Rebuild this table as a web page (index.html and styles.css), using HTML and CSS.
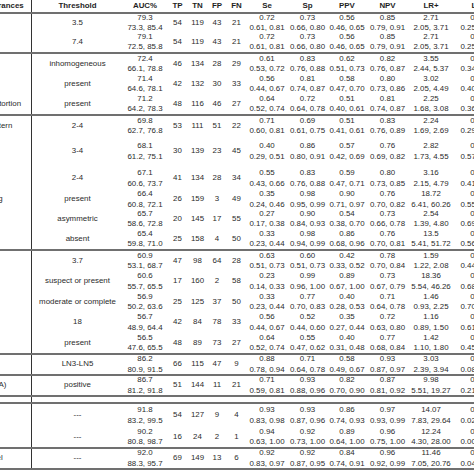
FILE: index.html
```html
<!DOCTYPE html>
<html>
<head>
<meta charset="utf-8">
<link rel="stylesheet" href="styles.css">
</head>
<body>
<div class="tbl">
  <div class="r hd h12">
    <div class="c lab">Imaging appearances</div>
    <div class="c thr">Threshold</div>
    <div class="c auc">AUC%</div>
    <div class="c tp">TP</div><div class="c tn">TN</div><div class="c fp">FP</div><div class="c fn">FN</div>
    <div class="c se">Se</div><div class="c sp">Sp</div><div class="c ppv">PPV</div><div class="c npv">NPV</div>
    <div class="c lrp">LR+</div><div class="c lrm">LR-</div>
  </div>

  <div class="r sep h18">
    <div class="c lab">Size (cm)</div><div class="c thr">3.5</div>
    <div class="c auc"><span>79.3</span><span>73.3, 85.4</span></div>
    <div class="c tp">54</div><div class="c tn">119</div><div class="c fp">43</div><div class="c fn">21</div>
    <div class="c se"><span>0.72</span><span>0.61, 0.81</span></div>
    <div class="c sp"><span>0.73</span><span>0.66, 0.80</span></div>
    <div class="c ppv"><span>0.56</span><span>0.46, 0.65</span></div>
    <div class="c npv"><span>0.85</span><span>0.79, 0.91</span></div>
    <div class="c lrp"><span>2.71</span><span>2.05, 3.71</span></div>
    <div class="c lrm"><span>0.38</span><span>0.25, 0.57</span></div>
  </div>
  <div class="r h20">
    <div class="c lab">Volume</div><div class="c thr">7.4</div>
    <div class="c auc"><span>79.1</span><span>72.5, 85.8</span></div>
    <div class="c tp">54</div><div class="c tn">119</div><div class="c fp">43</div><div class="c fn">21</div>
    <div class="c se"><span>0.72</span><span>0.61, 0.81</span></div>
    <div class="c sp"><span>0.73</span><span>0.66, 0.80</span></div>
    <div class="c ppv"><span>0.56</span><span>0.46, 0.65</span></div>
    <div class="c npv"><span>0.85</span><span>0.79, 0.91</span></div>
    <div class="c lrp"><span>2.71</span><span>2.05, 3.71</span></div>
    <div class="c lrm"><span>0.38</span><span>0.25, 0.57</span></div>
  </div>

  <div class="r sep h20">
    <div class="c lab">Echotexture</div><div class="c thr">inhomogeneous</div>
    <div class="c auc"><span>72.4</span><span>66.1, 78.8</span></div>
    <div class="c tp">46</div><div class="c tn">134</div><div class="c fp">28</div><div class="c fn">29</div>
    <div class="c se"><span>0.61</span><span>0.53, 0.72</span></div>
    <div class="c sp"><span>0.83</span><span>0.76, 0.88</span></div>
    <div class="c ppv"><span>0.62</span><span>0.51, 0.73</span></div>
    <div class="c npv"><span>0.82</span><span>0.76, 0.87</span></div>
    <div class="c lrp"><span>3.55</span><span>2.44, 5.37</span></div>
    <div class="c lrm"><span>0.47</span><span>0.34, 0.63</span></div>
  </div>
  <div class="r h20">
    <div class="c lab">Microlobulation</div><div class="c thr">present</div>
    <div class="c auc"><span>71.4</span><span>64.6, 78.1</span></div>
    <div class="c tp">42</div><div class="c tn">132</div><div class="c fp">30</div><div class="c fn">33</div>
    <div class="c se"><span>0.56</span><span>0.44, 0.67</span></div>
    <div class="c sp"><span>0.81</span><span>0.74, 0.87</span></div>
    <div class="c ppv"><span>0.58</span><span>0.47, 0.70</span></div>
    <div class="c npv"><span>0.80</span><span>0.73, 0.86</span></div>
    <div class="c lrp"><span>3.02</span><span>2.05, 4.49</span></div>
    <div class="c lrm"><span>0.54</span><span>0.40, 0.72</span></div>
  </div>
  <div class="r h20">
    <div class="c lab">Architectural distortion</div><div class="c thr">present</div>
    <div class="c auc"><span>71.2</span><span>64.2, 78.3</span></div>
    <div class="c tp">48</div><div class="c tn">116</div><div class="c fp">46</div><div class="c fn">27</div>
    <div class="c se"><span>0.64</span><span>0.52, 0.74</span></div>
    <div class="c sp"><span>0.72</span><span>0.64, 0.78</span></div>
    <div class="c ppv"><span>0.51</span><span>0.40, 0.61</span></div>
    <div class="c npv"><span>0.81</span><span>0.74, 0.87</span></div>
    <div class="c lrp"><span>2.25</span><span>1.68, 3.08</span></div>
    <div class="c lrm"><span>0.50</span><span>0.36, 0.67</span></div>
  </div>

  <div class="r sep h20">
    <div class="c lab">Calcification pattern</div><div class="c thr">2-4</div>
    <div class="c auc"><span>69.8</span><span>62.7, 76.8</span></div>
    <div class="c tp">53</div><div class="c tn">111</div><div class="c fp">51</div><div class="c fn">22</div>
    <div class="c se"><span>0.71</span><span>0.60, 0.81</span></div>
    <div class="c sp"><span>0.69</span><span>0.61, 0.75</span></div>
    <div class="c ppv"><span>0.51</span><span>0.41, 0.61</span></div>
    <div class="c npv"><span>0.83</span><span>0.76, 0.89</span></div>
    <div class="c lrp"><span>2.24</span><span>1.69, 2.69</span></div>
    <div class="c lrm"><span>0.42</span><span>0.29, 0.60</span></div>
  </div>
  <div class="r h31">
    <div class="c lab">Vascularity</div><div class="c thr">3-4</div>
    <div class="c auc"><span>68.1</span><span>61.2, 75.1</span></div>
    <div class="c tp">30</div><div class="c tn">139</div><div class="c fp">23</div><div class="c fn">45</div>
    <div class="c se"><span>0.40</span><span>0.29, 0.51</span></div>
    <div class="c sp"><span>0.86</span><span>0.80, 0.91</span></div>
    <div class="c ppv"><span>0.57</span><span>0.42, 0.69</span></div>
    <div class="c npv"><span>0.76</span><span>0.69, 0.82</span></div>
    <div class="c lrp"><span>2.82</span><span>1.73, 4.55</span></div>
    <div class="c lrm"><span>0.70</span><span>0.57, 0.85</span></div>
  </div>
  <div class="r h23">
    <div class="c lab">BI-RADS</div><div class="c thr">2-4</div>
    <div class="c auc"><span>67.1</span><span>60.6, 73.7</span></div>
    <div class="c tp">41</div><div class="c tn">134</div><div class="c fp">28</div><div class="c fn">34</div>
    <div class="c se"><span>0.55</span><span>0.43, 0.66</span></div>
    <div class="c sp"><span>0.83</span><span>0.76, 0.88</span></div>
    <div class="c ppv"><span>0.59</span><span>0.47, 0.71</span></div>
    <div class="c npv"><span>0.80</span><span>0.73, 0.85</span></div>
    <div class="c lrp"><span>3.16</span><span>2.15, 4.79</span></div>
    <div class="c lrm"><span>0.54</span><span>0.41, 0.70</span></div>
  </div>
  <div class="r h19">
    <div class="c lab">Distal shadowing</div><div class="c thr">present</div>
    <div class="c auc"><span>66.4</span><span>60.8, 72.1</span></div>
    <div class="c tp">26</div><div class="c tn">159</div><div class="c fp">3</div><div class="c fn">49</div>
    <div class="c se"><span>0.35</span><span>0.24, 0.46</span></div>
    <div class="c sp"><span>0.98</span><span>0.95, 0.99</span></div>
    <div class="c ppv"><span>0.90</span><span>0.71, 0.97</span></div>
    <div class="c npv"><span>0.76</span><span>0.70, 0.82</span></div>
    <div class="c lrp"><span>18.72</span><span>6.41, 60.26</span></div>
    <div class="c lrm"><span>0.66</span><span>0.55, 0.78</span></div>
  </div>
  <div class="r h20">
    <div class="c lab">Shape</div><div class="c thr">asymmetric</div>
    <div class="c auc"><span>65.7</span><span>58.6, 72.8</span></div>
    <div class="c tp">20</div><div class="c tn">145</div><div class="c fp">17</div><div class="c fn">55</div>
    <div class="c se"><span>0.27</span><span>0.17, 0.38</span></div>
    <div class="c sp"><span>0.90</span><span>0.84, 0.93</span></div>
    <div class="c ppv"><span>0.54</span><span>0.38, 0.70</span></div>
    <div class="c npv"><span>0.73</span><span>0.66, 0.78</span></div>
    <div class="c lrp"><span>2.54</span><span>1.39, 4.80</span></div>
    <div class="c lrm"><span>0.81</span><span>0.69, 0.94</span></div>
  </div>
  <div class="r h20">
    <div class="c lab">Hilum</div><div class="c thr">absent</div>
    <div class="c auc"><span>65.4</span><span>59.8, 71.0</span></div>
    <div class="c tp">25</div><div class="c tn">158</div><div class="c fp">4</div><div class="c fn">50</div>
    <div class="c se"><span>0.33</span><span>0.23, 0.44</span></div>
    <div class="c sp"><span>0.98</span><span>0.94, 0.99</span></div>
    <div class="c ppv"><span>0.86</span><span>0.68, 0.96</span></div>
    <div class="c npv"><span>0.76</span><span>0.70, 0.81</span></div>
    <div class="c lrp"><span>13.5</span><span>5.41, 51.72</span></div>
    <div class="c lrm"><span>0.68</span><span>0.56, 0.81</span></div>
  </div>

  <div class="r sep h20">
    <div class="c lab">Diameter</div><div class="c thr">3.7</div>
    <div class="c auc"><span>60.9</span><span>53.1, 68.7</span></div>
    <div class="c tp">47</div><div class="c tn">98</div><div class="c fp">64</div><div class="c fn">28</div>
    <div class="c se"><span>0.63</span><span>0.51, 0.73</span></div>
    <div class="c sp"><span>0.60</span><span>0.51, 0.73</span></div>
    <div class="c ppv"><span>0.42</span><span>0.33, 0.52</span></div>
    <div class="c npv"><span>0.78</span><span>0.70, 0.84</span></div>
    <div class="c lrp"><span>1.59</span><span>1.22, 2.08</span></div>
    <div class="c lrm"><span>0.62</span><span>0.44, 0.86</span></div>
  </div>
  <div class="r h21">
    <div class="c lab">Necrosis</div><div class="c thr">suspect or present</div>
    <div class="c auc"><span>60.6</span><span>55.7, 65.5</span></div>
    <div class="c tp">17</div><div class="c tn">160</div><div class="c fp">2</div><div class="c fn">58</div>
    <div class="c se"><span>0.23</span><span>0.14, 0.33</span></div>
    <div class="c sp"><span>0.99</span><span>0.96, 1.00</span></div>
    <div class="c ppv"><span>0.89</span><span>0.67, 1.00</span></div>
    <div class="c npv"><span>0.73</span><span>0.67, 0.79</span></div>
    <div class="c lrp"><span>18.36</span><span>5.54, 46.26</span></div>
    <div class="c lrm"><span>0.78</span><span>0.68, 0.88</span></div>
  </div>
  <div class="r h20">
    <div class="c lab">Loss of hilum</div><div class="c thr">moderate or complete</div>
    <div class="c auc"><span>56.9</span><span>50.2, 63.6</span></div>
    <div class="c tp">25</div><div class="c tn">125</div><div class="c fp">37</div><div class="c fn">50</div>
    <div class="c se"><span>0.33</span><span>0.23, 0.44</span></div>
    <div class="c sp"><span>0.77</span><span>0.70, 0.83</span></div>
    <div class="c ppv"><span>0.40</span><span>0.28, 0.53</span></div>
    <div class="c npv"><span>0.71</span><span>0.64, 0.78</span></div>
    <div class="c lrp"><span>1.46</span><span>0.93, 2.25</span></div>
    <div class="c lrm"><span>0.87</span><span>0.70, 1.08</span></div>
  </div>
  <div class="r h21">
    <div class="c lab">Age</div><div class="c thr">18</div>
    <div class="c auc"><span>56.7</span><span>48.9, 64.4</span></div>
    <div class="c tp">42</div><div class="c tn">84</div><div class="c fp">78</div><div class="c fn">33</div>
    <div class="c se"><span>0.56</span><span>0.44, 0.67</span></div>
    <div class="c sp"><span>0.52</span><span>0.44, 0.60</span></div>
    <div class="c ppv"><span>0.35</span><span>0.27, 0.44</span></div>
    <div class="c npv"><span>0.72</span><span>0.63, 0.80</span></div>
    <div class="c lrp"><span>1.16</span><span>0.89, 1.50</span></div>
    <div class="c lrm"><span>0.85</span><span>0.61, 1.17</span></div>
  </div>
  <div class="r h20">
    <div class="c lab">Calcification</div><div class="c thr">present</div>
    <div class="c auc"><span>56.5</span><span>47.6, 65.5</span></div>
    <div class="c tp">48</div><div class="c tn">89</div><div class="c fp">73</div><div class="c fn">27</div>
    <div class="c se"><span>0.64</span><span>0.52, 0.74</span></div>
    <div class="c sp"><span>0.55</span><span>0.47, 0.62</span></div>
    <div class="c ppv"><span>0.40</span><span>0.31, 0.48</span></div>
    <div class="c npv"><span>0.77</span><span>0.68, 0.84</span></div>
    <div class="c lrp"><span>1.42</span><span>1.10, 1.80</span></div>
    <div class="c lrm"><span>0.65</span><span>0.45, 0.95</span></div>
  </div>

  <div class="r sep h19">
    <div class="c lab">Location</div><div class="c thr">LN3-LN5</div>
    <div class="c auc"><span>86.2</span><span>80.9, 91.5</span></div>
    <div class="c tp">66</div><div class="c tn">115</div><div class="c fp">47</div><div class="c fn">9</div>
    <div class="c se"><span>0.88</span><span>0.78, 0.94</span></div>
    <div class="c sp"><span>0.71</span><span>0.64, 0.78</span></div>
    <div class="c ppv"><span>0.58</span><span>0.49, 0.67</span></div>
    <div class="c npv"><span>0.93</span><span>0.87, 0.97</span></div>
    <div class="c lrp"><span>3.03</span><span>2.39, 3.94</span></div>
    <div class="c lrm"><span>0.17</span><span>0.08, 0.33</span></div>
  </div>

  <div class="r sep h19">
    <div class="c lab">Elastography (PA)</div><div class="c thr">positive</div>
    <div class="c auc"><span>86.7</span><span>81.2, 91.8</span></div>
    <div class="c tp">51</div><div class="c tn">144</div><div class="c fp">11</div><div class="c fn">21</div>
    <div class="c se"><span>0.71</span><span>0.59, 0.81</span></div>
    <div class="c sp"><span>0.93</span><span>0.88, 0.96</span></div>
    <div class="c ppv"><span>0.82</span><span>0.70, 0.90</span></div>
    <div class="c npv"><span>0.87</span><span>0.81, 0.92</span></div>
    <div class="c lrp"><span>9.98</span><span>5.51, 19.27</span></div>
    <div class="c lrm"><span>0.31</span><span>0.21, 0.46</span></div>
  </div>

  <div class="r sep h5">
    <div class="c lab"></div>
  </div>

  <div class="r sep h23">
    <div class="c lab">Model 1</div><div class="c thr">---</div>
    <div class="c auc"><span>91.8</span><span>83.2, 99.5</span></div>
    <div class="c tp">54</div><div class="c tn">127</div><div class="c fp">9</div><div class="c fn">4</div>
    <div class="c se"><span>0.93</span><span>0.83, 0.98</span></div>
    <div class="c sp"><span>0.93</span><span>0.87, 0.96</span></div>
    <div class="c ppv"><span>0.86</span><span>0.74, 0.93</span></div>
    <div class="c npv"><span>0.97</span><span>0.93, 0.99</span></div>
    <div class="c lrp"><span>14.07</span><span>7.83, 29.64</span></div>
    <div class="c lrm"><span>0.08</span><span>0.02, 0.20</span></div>
  </div>
  <div class="r h20">
    <div class="c lab">Model 2</div><div class="c thr">---</div>
    <div class="c auc"><span>90.2</span><span>80.8, 98.7</span></div>
    <div class="c tp">16</div><div class="c tn">24</div><div class="c fp">2</div><div class="c fn">1</div>
    <div class="c se"><span>0.94</span><span>0.63, 1.00</span></div>
    <div class="c sp"><span>0.92</span><span>0.73, 1.00</span></div>
    <div class="c ppv"><span>0.89</span><span>0.64, 1.00</span></div>
    <div class="c npv"><span>0.96</span><span>0.75, 1.00</span></div>
    <div class="c lrp"><span>12.24</span><span>4.30, 28.00</span></div>
    <div class="c lrm"><span>0.07</span><span>0.00, 0.44</span></div>
  </div>

  <div class="r sep end h19">
    <div class="c lab">Combined model</div><div class="c thr">---</div>
    <div class="c auc"><span>92.0</span><span>88.3, 95.7</span></div>
    <div class="c tp">69</div><div class="c tn">149</div><div class="c fp">13</div><div class="c fn">6</div>
    <div class="c se"><span>0.92</span><span>0.83, 0.97</span></div>
    <div class="c sp"><span>0.92</span><span>0.87, 0.95</span></div>
    <div class="c ppv"><span>0.84</span><span>0.74, 0.91</span></div>
    <div class="c npv"><span>0.96</span><span>0.92, 0.99</span></div>
    <div class="c lrp"><span>11.46</span><span>7.05, 20.76</span></div>
    <div class="c lrm"><span>0.09</span><span>0.04, 0.19</span></div>
  </div>
</div>
</body>
</html>
```
FILE: styles.css
```css
html, body {
  margin: 0;
  padding: 0;
  background: #ffffff;
  overflow: hidden;
}
body {
  font-family: "Liberation Sans", Arial, sans-serif;
  font-size: 7.9px;
  color: #2b2b2b;
}
.tbl {
  margin-left: -60px;
  width: 562px;
}
.r {
  display: flex;
  align-items: stretch;
}
.sep { border-top: 2px solid #707070; }
.end { border-bottom: 2px solid #707070; }
.hd { font-weight: bold; color: #1e1e1e; }

.h5 { height: 5px; }
.h12 { height: 12px; }
.h18 { height: 18px; }
.h19 { height: 19px; }
.h20 { height: 20px; }
.h21 { height: 21px; }
.h23 { height: 23px; }
.h31 { height: 31px; }

.c {
  flex: none;
  box-sizing: border-box;
  display: flex;
  flex-direction: column;
  justify-content: center;
  align-items: center;
  line-height: 10.5px;
  white-space: nowrap;
}
.c span { display: block; }
.lab {
  width: 92px;
  align-items: flex-start;
  padding-left: 3px;
  border-right: 1px solid #333333;
}
.thr { width: 91px; }
.auc { width: 44px; }
.tp  { width: 21px; }
.tn  { width: 19px; }
.fp  { width: 20px; }
.fn  { width: 19px; }
.se  { width: 42px; }
.sp  { width: 39px; }
.ppv { width: 40px; }
.npv { width: 41px; }
.lrp { width: 46px; }
.lrm { width: 48px; }
```
